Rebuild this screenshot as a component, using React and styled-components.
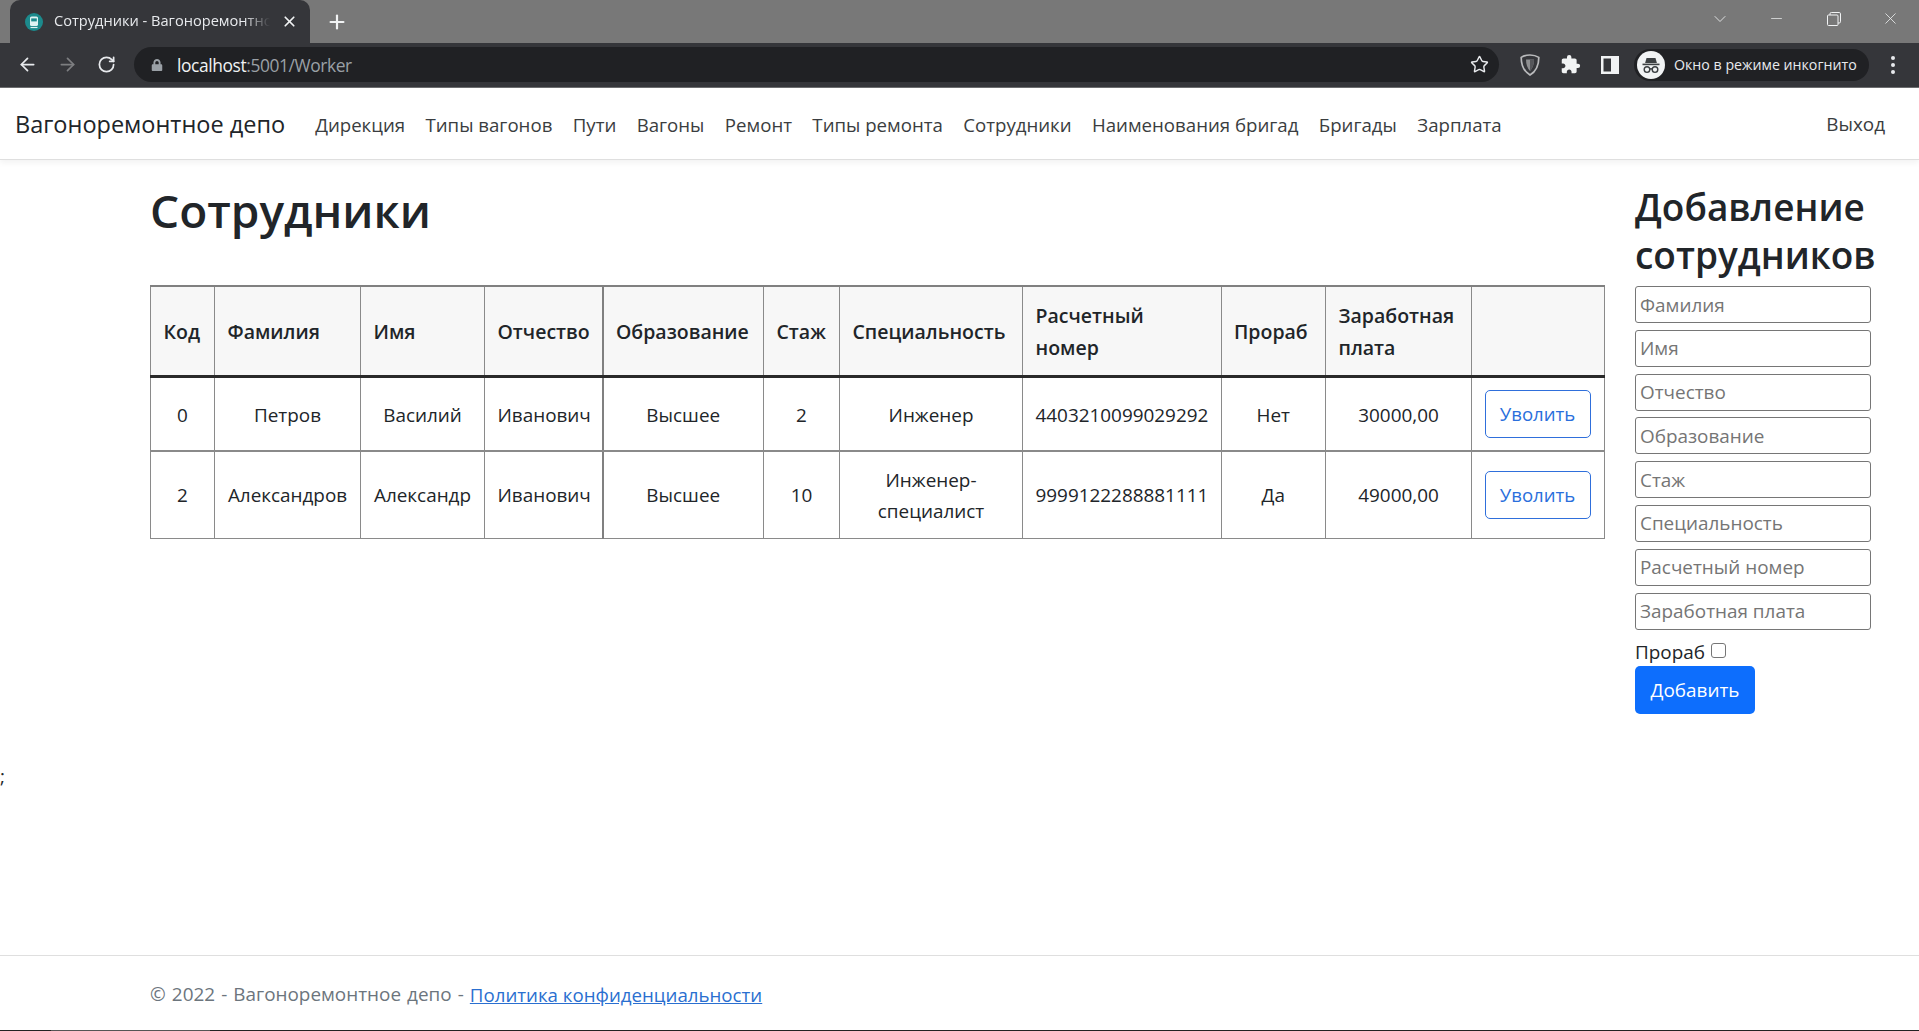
import React from "react";
import styled, { createGlobalStyle } from "styled-components";
import { ArrowLeft, ArrowRight, RotateCw, Star, Plus, X, ChevronDown, Minus } from "lucide-react";
import { FaLock } from "react-icons/fa";
import { MdExtension } from "react-icons/md";

const Global = createGlobalStyle`
  html, body { margin: 0; padding: 0; background: #fff; }
  body { font-family: "Open Sans", "Noto Sans", sans-serif; color: #212529; overflow: hidden; }
  * { box-sizing: border-box; }
`;

const Page = styled.div`
  width: 1919px; height: 1031px; display: flex; flex-direction: column; overflow: hidden; background: #fff;
`;

const TabStrip = styled.div`
  height: 43px; background: #787878; display: flex; align-items: stretch; padding-left: 10px; flex: none;
`;
const Tab = styled.div`
  width: 300px; background: #35363a; border-radius: 10px 10px 0 0; display: flex; align-items: center;
  padding: 0 12px 0 15px; gap: 11px;
`;
const TabTitle = styled.div`
  flex: 1; color: #e8eaed; font-size: 14.6px; line-height: 20px; margin-bottom: 3px; white-space: nowrap; overflow: hidden;
  -webkit-mask-image: linear-gradient(90deg, #000 88%, transparent 100%);
  mask-image: linear-gradient(90deg, #000 88%, transparent 100%);
`;
const NewTab = styled.div`
  display: flex; align-items: center; margin-left: 16px; color: #f1f3f4;
`;
const WindowControls = styled.div`
  margin-left: auto; display: flex; align-items: center; color: #f1f3f4; padding-bottom: 6px;
`;
const WinBtn = styled.div`
  width: 57px; display: flex; justify-content: center;
`;
const Toolbar = styled.div`
  height: 45px; flex: none; background: #35363a; border-bottom: 1px solid #6d6e70; display: flex; align-items: center;
  padding: 0 0 1px 18px; color: #e8eaed;
`;
const NavIcon = styled.div`
  width: 41px; margin-left: -1px; display: flex; color: ${p => p.$dim ? "#7d7e80" : "#e8eaed"};
`;
const UrlBar = styled.div`
  margin-left: -4px; width: 1365px; height: 35px; background: #202124; border-radius: 18px; display: flex; align-items: center;
  padding: 0 10px 0 17px; font-size: 17.4px;
`;
const UrlHost = styled.span`
  color: #f1f3f4; margin-left: 14px; letter-spacing: -0.4px;
`;
const UrlPath = styled.span`
  color: #9aa0a6; letter-spacing: -0.4px;
`;
const UrlStar = styled.div`
  margin-left: auto; display: flex;
`;
const ExtIcons = styled.div`
  display: flex; align-items: center; gap: 20px; margin-left: 21px;
`;
const Incognito = styled.div`
  margin-left: 15px; width: 235px; height: 32px; background: #202124; border-radius: 16px; display: flex; align-items: center;
  padding-left: 3px; gap: 9px; color: #e8eaed; font-size: 14.2px; white-space: nowrap;
`;
const Dots = styled.div`
  margin-left: 22px; display: flex; flex-direction: column; gap: 3px;
  span { width: 4px; height: 4px; border-radius: 50%; background: #e8eaed; }
`;

const Nav = styled.nav`
  height: 72px; flex: none; background: #fff; border-bottom: 1px solid #dfdfdf; box-shadow: 0 3px 6px rgba(0,0,0,.05);
  display: flex; align-items: center; padding: 1px 34px 0 15px; font-size: 18.65px;
`;
const Brand = styled.div`
  font-size: 23.5px; color: #212529; margin-right: 30px; white-space: nowrap;
`;
const NavLinks = styled.div`
  display: flex; gap: 20.4px; white-space: nowrap; color: #3a3d40;
`;
const NavLink = styled.a`
  color: #3a3d40;
`;
const Logout = styled(NavLink)`
  margin-left: auto; font-size: 18.9px;
`;

const Main = styled.main`
  display: flex; padding-left: 150px; gap: 30px; flex: none;
`;
const LeftCol = styled.section`
  width: 1455px; flex: none;
`;
const Title = styled.h1`
  margin: 21px 0 45px; font-size: 46px; line-height: 59px; font-weight: 600; color: #212529;
`;
const Table = styled.table`
  width: 1454px; table-layout: fixed; border-collapse: collapse; font-size: 18.9px; color: #212529;
  border-top: 2px solid #808080;
`;
const Th = styled.th`
  background: #f7f7f7; border: 1px solid #8a8a8a; border-bottom: 3px solid #2a2a2a; padding: 2px 10px 0 12.5px; height: 90px;
  text-align: left; font-weight: 600; font-size: 19.5px; line-height: 32px; color: #212529; white-space: pre-line;
  ${p => p.$thick && "border-left: 2px solid #808080;"}
`;
const Td = styled.td`
  border: 1px solid #8a8a8a; border-bottom-width: ${p => p.$last ? "1px" : "2px"}; padding: ${p => p.$last ? "2px" : "4px"} 12.5px 0; text-align: center; line-height: 31px;
  ${p => p.$thick && "border-left: 2px solid #808080;"}
`;
const ActionTd = styled(Td)`
  padding: 0 12.5px;
`;
const Row = styled.tr`
  height: ${p => p.$h}px;
`;
const FireButton = styled.button`
  width: 106px; height: 48px; border: 1px solid #2f6fdb; border-radius: 5px; background: #fff; color: #2a6fdc;
  font: inherit; font-size: 18.6px; padding: 0; display: block;
`;

const Side = styled.aside`
  width: 240px; flex: none;
`;
const SideTitle = styled.h2`
  margin: 23px 0 7px; font-size: 37px; line-height: 48px; font-weight: 600; color: #212529; white-space: nowrap;
`;
const Form = styled.form`
  display: flex; flex-direction: column; gap: 6.8px; align-items: flex-start;
`;
const Input = styled.input`
  width: 236px; height: 37px; border: 1px solid #767676; border-radius: 3px; padding: 0 4px; font: inherit; font-size: 18.9px;
  background: #fff; display: block; outline: none;
  &::placeholder { color: #757575; opacity: 1; }
`;
const CheckRow = styled.label`
  display: flex; align-items: center; font-size: 18.9px; color: #212529; height: 29px; margin-top: 1px; margin-bottom: -6.8px;
`;
const Check = styled.input`
  appearance: none; width: 15px; height: 15px; margin: 0 0 3px 6px; border: 1px solid #767676; border-radius: 3px; background: #fff;
`;
const AddButton = styled.button`
  width: 120px; height: 48px; background: #0d6efd; color: #fff; border: none; border-radius: 5px; font: inherit; font-size: 18.9px; padding: 0;
`;

const Stray = styled.div`
  margin-top: 48px; font-size: 18.9px; line-height: 29px; height: 29px; flex: none; color: #212529;
`;
const Footer = styled.footer`
  margin-top: auto; height: 75px; flex: none; border-top: 1px solid #dfdfdf; padding-left: 150px; display: flex; align-items: center;
  font-size: 18.9px; color: #6c757d; padding-top: 2px; gap: 6px; white-space: pre;
`;
const Copyright = styled.span`
  word-spacing: 1.2px;
`;
const PolicyLink = styled.a`
  color: #2a6fd0; text-decoration: underline; font-size: 18.7px;
`;
const BottomEdge = styled.div`
  height: 1px; flex: none; background: linear-gradient(90deg, #222 0 51px, #555 51px 210px, #222 210px);
`;

const Favicon = () => (
  <svg width="18" height="18" viewBox="0 0 18 18" style={{ flex: "none" }}>
    <circle cx="9" cy="9" r="9" fill="#1c8a8c" />
    <rect x="5" y="3.5" width="8" height="9.5" rx="1.6" fill="#dff3f3" />
    <rect x="6.2" y="5.4" width="5.6" height="3" fill="#1c8a8c" />
    <path d="M5.5 14.5h7" stroke="#dff3f3" strokeWidth="1.2" />
  </svg>
);
const RestoreIcon = () => (
  <svg width="14" height="14" viewBox="0 0 14 14" fill="none" stroke="#f1f3f4" strokeWidth="1">
    <rect x="0.5" y="3" width="10.5" height="10.5" rx="1" />
    <path d="M3 3V1.8A1.3 1.3 0 0 1 4.3.5h8A1.3 1.3 0 0 1 13.5 1.8v8A1.3 1.3 0 0 1 12.2 11H11" />
  </svg>
);
const ShieldIcon = () => (
  <svg width="20" height="22" viewBox="0 0 20 22" fill="none">
    <path d="M1.2 3.4C4 1.6 7 1 10 1s6 .6 8.8 2.4C18.8 11 15.8 17.5 10 21 4.2 17.5 1.2 11 1.2 3.4Z" stroke="#b9babc" strokeWidth="1.7" />
    <path d="M6 5.5h8c0 5-1.4 8.8-4 11.5-2.6-2.7-4-6.5-4-11.5Z" fill="#8e8f91" />
    <path d="M10 5.5h4c0 5-1.4 8.8-4 11.5Z" fill="#55565a" />
  </svg>
);
const PanelIcon = () => (
  <svg width="18" height="18" viewBox="0 0 18 18">
    <path fillRule="evenodd" fill="#f1f3f4" d="M0 0h18v18H0ZM2.5 2.5v13h7.5v-13Z" />
  </svg>
);
const IncognitoIcon = () => (
  <svg width="28" height="28" viewBox="0 0 28 28" style={{ flex: "none" }}>
    <circle cx="14" cy="14" r="14" fill="#f1f3f4" />
    <path d="M9.5 7h9l1.4 5H8.1Z" fill="#3c4043" />
    <rect x="5.5" y="12.6" width="17" height="1.6" fill="#3c4043" />
    <g fill="none" stroke="#3c4043" strokeWidth="1.4">
      <circle cx="10" cy="18.6" r="2.8" />
      <circle cx="18" cy="18.6" r="2.8" />
      <path d="M12.8 18.2c.8-.5 1.6-.5 2.4 0" />
    </g>
  </svg>
);

const links = ["Дирекция", "Типы вагонов", "Пути", "Вагоны", "Ремонт", "Типы ремонта", "Сотрудники", "Наименования бригад", "Бригады", "Зарплата"];
const cols = [64, 146, 124, 118, 161, 76, 183, 198.5, 104.5, 146, 133];
const headers = ["Код", "Фамилия", "Имя", "Отчество", "Образование", "Стаж", "Специальность", "Расчетный\nномер", "Прораб", "Заработная\nплата", ""];
const rows = [
  { h: 75, cells: ["0", "Петров", "Василий", "Иванович", "Высшее", "2", "Инженер", "4403210099029292", "Нет", "30000,00"] },
  { h: 87, cells: ["2", "Александров", "Александр", "Иванович", "Высшее", "10", "Инженер-специалист", "9999122288881111", "Да", "49000,00"] },
];
const fields = ["Фамилия", "Имя", "Отчество", "Образование", "Стаж", "Специальность", "Расчетный номер", "Заработная плата"];

export default function App() {
  return (
    <Page>
      <Global />
      <TabStrip>
        <Tab>
          <Favicon />
          <TabTitle>Сотрудники - Вагоноремонтное депо</TabTitle>
          <X size={17} color="#f1f3f4" strokeWidth={2.4} />
        </Tab>
        <NewTab><Plus size={22} strokeWidth={2.4} /></NewTab>
        <WindowControls>
          <WinBtn><ChevronDown size={20} strokeWidth={1} /></WinBtn>
          <WinBtn><Minus size={17} strokeWidth={1} /></WinBtn>
          <WinBtn><RestoreIcon /></WinBtn>
          <WinBtn><X size={19} strokeWidth={1} /></WinBtn>
        </WindowControls>
      </TabStrip>
      <Toolbar>
        <NavIcon><ArrowLeft size={21} strokeWidth={2} /></NavIcon>
        <NavIcon $dim><ArrowRight size={21} strokeWidth={2} /></NavIcon>
        <NavIcon><RotateCw size={19} strokeWidth={2.2} /></NavIcon>
        <UrlBar>
          <FaLock size={12} color="#9aa0a6" />
          <UrlHost>localhost</UrlHost><UrlPath>:5001/Worker</UrlPath>
          <UrlStar><Star size={19} strokeWidth={1.8} color="#e8eaed" /></UrlStar>
        </UrlBar>
        <ExtIcons>
          <ShieldIcon />
          <MdExtension size={21} color="#f1f3f4" />
          <PanelIcon />
        </ExtIcons>
        <Incognito>
          <IncognitoIcon />
          Окно в режиме инкогнито
        </Incognito>
        <Dots><span /><span /><span /></Dots>
      </Toolbar>
      <Nav>
        <Brand>Вагоноремонтное депо</Brand>
        <NavLinks>
          {links.map(l => <NavLink key={l}>{l}</NavLink>)}
        </NavLinks>
        <Logout>Выход</Logout>
      </Nav>
      <Main>
        <LeftCol>
          <Title>Сотрудники</Title>
          <Table>
            <colgroup>
              {cols.map((w, i) => <col key={i} style={{ width: w }} />)}
            </colgroup>
            <thead>
              <tr>
                {headers.map((h, i) => <Th key={i} $thick={i === 4}>{h}</Th>)}
              </tr>
            </thead>
            <tbody>
              {rows.map((r, ri) => (
                <Row key={ri} $h={r.h}>
                  {r.cells.map((c, i) => <Td key={i} $last={ri === 1} $thick={i === 4}>{c}</Td>)}
                  <ActionTd $last={ri === 1}><FireButton type="button">Уволить</FireButton></ActionTd>
                </Row>
              ))}
            </tbody>
          </Table>
        </LeftCol>
        <Side>
          <SideTitle>Добавление<br />сотрудников</SideTitle>
          <Form>
            {fields.map(f => <Input key={f} placeholder={f} />)}
            <CheckRow>Прораб<Check type="checkbox" /></CheckRow>
            <AddButton type="button">Добавить</AddButton>
          </Form>
        </Side>
      </Main>
      <Stray>;</Stray>
      <Footer>
        <Copyright>© 2022 - Вагоноремонтное депо -</Copyright>
        <PolicyLink>Политика конфиденциальности</PolicyLink>
      </Footer>
      <BottomEdge />
    </Page>
  );
}
